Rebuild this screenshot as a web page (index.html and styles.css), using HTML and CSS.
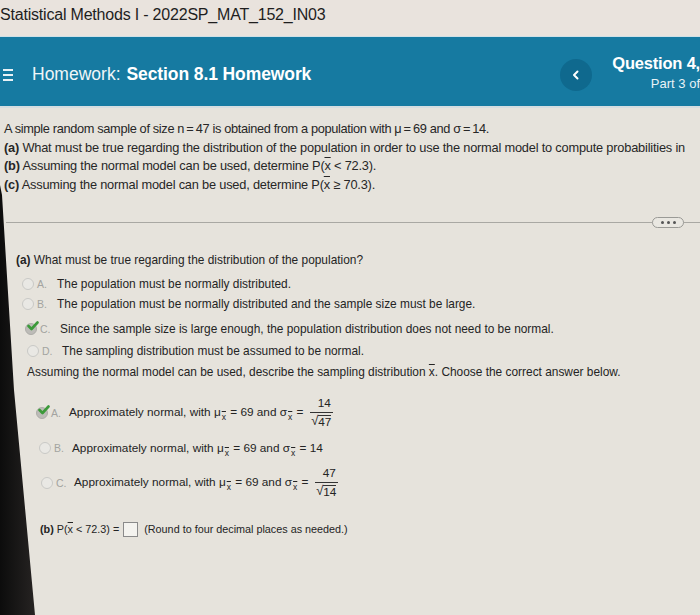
FILE: index.html
```html
<!DOCTYPE html>
<html>
<head>
<meta charset="utf-8">
<link rel="stylesheet" href="styles.css">
</head>
<body>
<div class="page">
  <div class="titlebar">Statistical Methods I - 2022SP_MAT_152_IN03</div>
  <header class="header">
    <div class="hw">
      <span class="burger"><i></i><i></i><i></i></span>
      <span class="hw-label">Homework:</span>
      <span class="hw-name">Section 8.1 Homework</span>
    </div>
    <div class="qnav">
      <span class="back"><svg width="10" height="10" viewBox="0 0 10 10"><path d="M6.5 1.5 L3 5 L6.5 8.5" fill="none" stroke="#fff" stroke-width="2" stroke-linecap="round" stroke-linejoin="round"/></svg></span>
      <div class="qinfo">
        <div class="qnum">Question 4,</div>
        <div class="qpart">Part 3 of</div>
      </div>
    </div>
  </header>

  <section class="problem">
    <p class="first">A simple random sample of size n&thinsp;=&thinsp;47 is obtained from a population with μ&thinsp;=&thinsp;69 and σ&thinsp;=&thinsp;14.</p>
    <p><b>(a)</b> What must be true regarding the distribution of the population in order to use the normal model to compute probabilities in</p>
    <p><b>(b)</b> Assuming the normal model can be used, determine P(<span class="xbar">x</span> &lt; 72.3).</p>
    <p><b>(c)</b> Assuming the normal model can be used, determine P(<span class="xbar">x</span> ≥ 70.3).</p>
  </section>

  <div class="divider"><span class="more"><i></i><i></i><i></i></span></div>

  <section class="work">
    <p class="q q1"><b>(a)</b> What must be true regarding the distribution of the population?</p>
    <div class="opt o1"><span class="radio"></span><span class="let">A.</span><span>The population must be normally distributed.</span></div>
    <div class="opt o2"><span class="radio"></span><span class="let">B.</span><span>The population must be normally distributed and the sample size must be large.</span></div>
    <div class="opt o3"><span class="radio on"><svg class="check" width="12" height="10" viewBox="0 0 12 10"><path d="M1.5 5 L4.5 8 L10.5 1.5" fill="none" stroke="#3c9a3a" stroke-width="2.6" stroke-linecap="round" stroke-linejoin="round"/></svg></span><span class="let">C.</span><span>Since the sample size is large enough, the population distribution does not need to be normal.</span></div>
    <div class="opt o4"><span class="radio"></span><span class="let">D.</span><span>The sampling distribution must be assumed to be normal.</span></div>
    <p class="q q2">Assuming the normal model can be used, describe the sampling distribution <span class="xbar">x</span>. Choose the correct answer below.</p>

    <div class="opt big b1"><span class="radio on"><svg class="check" width="12" height="10" viewBox="0 0 12 10"><path d="M1.5 5 L4.5 8 L10.5 1.5" fill="none" stroke="#3c9a3a" stroke-width="2.6" stroke-linecap="round" stroke-linejoin="round"/></svg></span><span class="let">A.</span>
      <span class="math">Approximately normal, with μ<sub><span class="xbar">x</span></sub> = 69 and σ<sub><span class="xbar">x</span></sub> = <span class="frac"><span class="num">14</span><span class="den"><span class="rad">√</span><span class="radicand">47</span></span></span></span></div>
    <div class="opt big b2"><span class="radio"></span><span class="let">B.</span>
      <span class="math">Approximately normal, with μ<sub><span class="xbar">x</span></sub> = 69 and σ<sub><span class="xbar">x</span></sub> = 14</span></div>
    <div class="opt big b3"><span class="radio"></span><span class="let">C.</span>
      <span class="math">Approximately normal, with μ<sub><span class="xbar">x</span></sub> = 69 and σ<sub><span class="xbar">x</span></sub> = <span class="frac"><span class="num">47</span><span class="den"><span class="rad">√</span><span class="radicand">14</span></span></span></span></div>

    <p class="q q3"><b>(b)</b> P(<span class="xbar">x</span> &lt; 72.3) = <span class="answer"></span> (Round to four decimal places as needed.)</p>
  </section>

  <svg class="bezel" width="40" height="430" viewBox="0 0 40 430"><defs><linearGradient id="g" x1="0" y1="0" x2="1" y2="0"><stop offset="0" stop-color="#0c0c0c"/><stop offset="1" stop-color="#262322"/></linearGradient></defs><path d="M0 0 L2 10 L14 205 L35 430 L0 430 Z" fill="url(#g)"/></svg>
</div>
</body>
</html>
```

FILE: styles.css
```css
* { box-sizing: border-box; }
html, body { margin: 0; padding: 0; }
body {
  width: 700px;
  height: 615px;
  overflow: hidden;
  font-family: "Liberation Sans", Arial, sans-serif;
  color: #272727;
  background: #e6e3dc;
}
.page { position: relative; width: 700px; height: 615px; overflow: hidden; }

.titlebar {
  height: 37px;
  background: #e9e3dd;
  font-size: 16px;
  letter-spacing: -0.2px;
  line-height: 29px;
  padding-left: 0;
  color: #1e1e1e;
  border-bottom: 1px solid #cfe0e6;
}

.header {
  height: 71px;
  background: #167aa1;
  display: flex;
  align-items: center;
  justify-content: space-between;
  color: #fff;
  border-bottom: 2px solid #d4dde0;
}
.hw { display: flex; align-items: center; padding-left: 3px; padding-top: 6px; font-size: 17.5px; }
.burger { display: flex; flex-direction: column; gap: 3px; width: 10px; margin-right: 19px; }
.burger i { display: block; height: 2px; background: #e8f2f6; }
.hw-label { margin-right: 6px; color: #f0f6f8; }
.hw-name { font-weight: bold; letter-spacing: -0.1px; }

.qnav { display: flex; align-items: center; padding-top: 2px; }
.back {
  width: 32px; height: 32px; border-radius: 50%;
  background: #0f698e;
  display: flex; align-items: center; justify-content: center;
  margin-right: 16px;
  margin-top: 4px;
}
.qinfo { text-align: right; width: 92px; }
.qnum { font-weight: bold; font-size: 16.5px; line-height: 20px; white-space: nowrap; letter-spacing: -0.2px; }
.qpart { font-size: 13px; line-height: 18px; margin-top: 2px; white-space: nowrap; color: #e8f2f6; }

.problem { padding: 12px 0 0 4px; font-size: 12.8px; letter-spacing: -0.2px; line-height: 18.7px; white-space: nowrap; overflow: hidden; }
.problem p { margin: 0; }
.problem .first { letter-spacing: -0.35px; }

.xbar { text-decoration: overline; text-decoration-thickness: 1px; }

.divider {
  position: relative;
  margin: 27px 0 0 6px;
  height: 1px;
  background: #a9a8a3;
}
.more {
  position: absolute; left: 646px; top: -5px;
  width: 32px; height: 11px;
  border: 1.5px solid #9a9a96; border-radius: 6px;
  background: #e9e7e1;
  display: flex; align-items: center; justify-content: center; gap: 3px;
}
.more i { width: 3px; height: 3px; border-radius: 50%; background: #555; display: block; }

.work { font-size: 11.9px; color: #242424; }
.work p { margin: 0; }
.q1 { margin-left: 16px !important; margin-top: 29px !important; line-height: 16px; }
.opt { display: flex; align-items: center; height: 16px; white-space: nowrap; }
.radio {
  position: relative;
  width: 12px; height: 12px; border-radius: 50%;
  border: 1px solid #c9c9c6; background: #e9e8e4;
  flex: none;
}
.radio.on { background: #bdbcb8; border-color: #aeada9; }
.check { position: absolute; left: 1px; top: -3px; }
.let { color: #a3a3a0; font-size: 10.5px; margin: 0 10px 0 3px; width: 10px; }
.o1 { margin: 8px 0 0 22px; }
.o2 { margin: 4px 0 0 22px; }
.o3 { margin: 9px 0 0 25px; }
.o4 { margin: 6px 0 0 27px; }
.q2 { margin: 5px 0 0 27px !important; line-height: 16px; }

.big { font-size: 11.8px; }
.big .let { margin-right: 8px; }
.b1 { margin: 15px 0 0 36px; height: 36px; }
.b2 { margin: 0 0 0 39px; height: 34px; }
.b3 { margin: 0 0 0 41px; height: 36px; }
.math { display: block; }
.math sub { font-size: 8.5px; vertical-align: -4px; margin-left: 1px; margin-right: 1px; line-height: 0; }
.frac { display: inline-flex; flex-direction: column; align-items: center; margin-left: 3px; vertical-align: middle; }
.num { padding: 0 2px 2px 8px; border-bottom: 1px solid #333; line-height: 14px; }
.den { line-height: 15px; display: flex; }
.rad { font-size: 13px; }
.radicand { border-top: 1px solid #333; line-height: 13px; margin-top: 2px; }

.q3 { margin: 21px 0 0 40px !important; font-size: 10.8px; display: flex; align-items: center; white-space: pre; }
.answer { display: inline-block; width: 15px; height: 15px; border: 1px solid #8a8a8a; background: #f4f3ef; margin: 0 3px 0 1px; }

.bezel { position: absolute; left: 0; top: 185px; }
```
